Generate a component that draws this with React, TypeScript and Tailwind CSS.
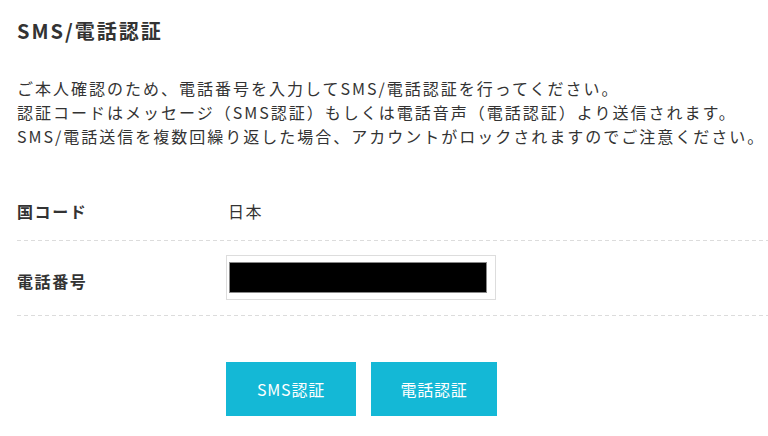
import React from "react";

const dash =
  "h-px w-full bg-[repeating-linear-gradient(to_right,#dcdcdc_0,#dcdcdc_4px,transparent_4px,transparent_7px)]";

export default function App() {
  return (
    <div
      className="w-[768px] h-[436px] bg-white text-[#333333] pl-[17px] pt-[17px] overflow-hidden"
      style={{ fontFamily: '"Noto Sans CJK JP", "Noto Sans", sans-serif' }}
    >
      <h1 className="text-[20px] leading-[28px] font-bold tracking-[0.1em]">SMS/電話認証</h1>
      <div className="mt-[31px] text-[16px] leading-[24px] tracking-[0.125em] whitespace-nowrap">
        <p>ご本人確認のため、電話番号を入力してSMS/電話認証を行ってください。</p>
        <p>認証コードはメッセージ（SMS認証）もしくは電話音声（電話認証）より送信されます。</p>
        <p>SMS/電話送信を複数回繰り返した場合、アカウントがロックされますのでご注意ください。</p>
      </div>
      <div className="mt-[51px] flex items-center pb-[17px] text-[16px] leading-[24px]">
        <div className="w-[209px] font-bold tracking-[0.1em]">国コード</div>
        <div className="pl-[2px] tracking-[0.1em]">日本</div>
      </div>
      <div className={dash} />
      <div className="flex items-center pt-[14px] pb-[15px] text-[16px] leading-[24px]">
        <div className="w-[209px] font-bold tracking-[0.1em] pt-[7px]">電話番号</div>
        <div className="w-[270px] h-[45px] border border-[#dddddd] pl-[2px] pr-[8px] py-[6px] bg-white">
          <div className="w-full h-full bg-black border border-[#888888]" />
        </div>
      </div>
      <div className={dash} />
      <div className="mt-[46px] pl-[209px] flex gap-[15px]">
        <button className="w-[130px] h-[54px] bg-[#14b8d6] text-white text-[16px] tracking-[0.05em] flex items-center justify-center">
          SMS認証
        </button>
        <button className="w-[126px] h-[54px] bg-[#14b8d6] text-white text-[16px] tracking-[0.05em] flex items-center justify-center">
          電話認証
        </button>
      </div>
    </div>
  );
}
